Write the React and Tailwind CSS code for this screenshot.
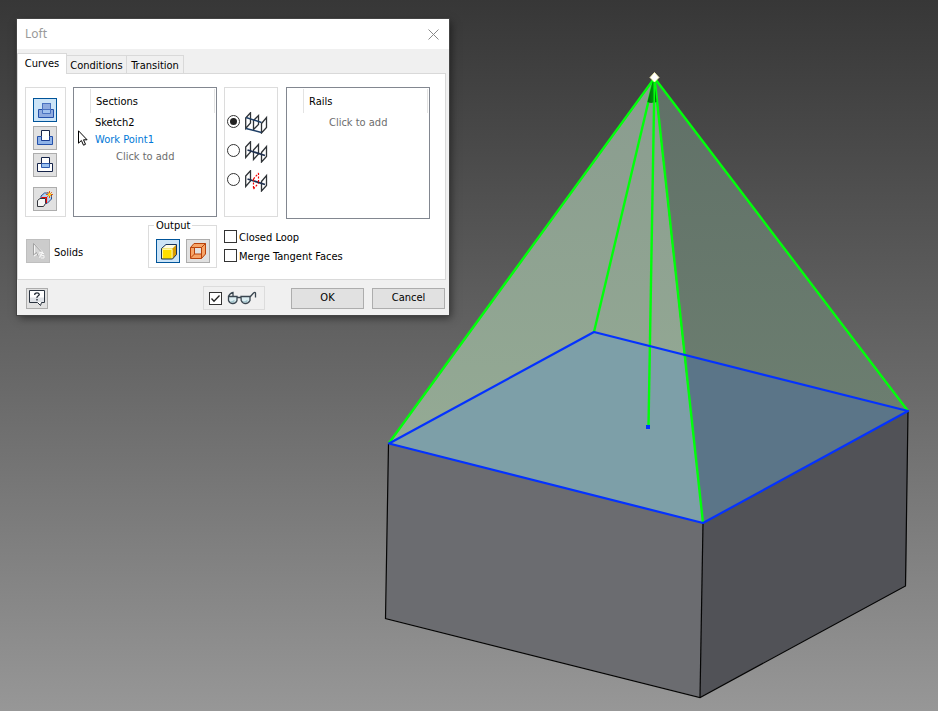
import { useState } from "react";

function Scene() {
  return (
    <svg
      viewBox="0 0 938 711"
      preserveAspectRatio="xMaxYMax meet"
      className="block h-full w-full"
      role="img"
      aria-label="Loft preview"
    >
      <defs>
        <linearGradient id="litFace" x1="0" y1="78" x2="0" y2="444" gradientUnits="userSpaceOnUse">
          <stop offset="0" stopColor="#8a9c8f" />
          <stop offset="1" stopColor="#94aa94" />
        </linearGradient>
        <linearGradient id="shadeFace" x1="0" y1="78" x2="0" y2="411" gradientUnits="userSpaceOnUse">
          <stop offset="0" stopColor="#607067" />
          <stop offset="1" stopColor="#6c7e70" />
        </linearGradient>
        <linearGradient id="cone" x1="646" x2="659" y1="0" y2="0" gradientUnits="userSpaceOnUse">
          <stop offset="0" stopColor="#005a08" />
          <stop offset="0.6" stopColor="#00950c" />
          <stop offset="1" stopColor="#00600a" />
        </linearGradient>
      </defs>
      <polygon points="388,444 703,523 700,697 386,618" fill="#6b6c70" />
      <polygon points="703,523 908,411 906,586 700,697" fill="#515257" />
      <polygon points="654,78 389,443 594,332 684,355" fill="url(#litFace)" />
      <polygon points="654,78 684,355 908,411" fill="url(#shadeFace)" />
      <polygon points="389,443 594,332 684,355 703,523" fill="#7d9fa8" />
      <polygon points="684,355 908,411 703,523" fill="#5b7588" />
      <g stroke="#050505" strokeWidth="1.2" fill="none">
        <path d="M388.500 444L385.500 618.500L700 697.500L905.500 586L908 411" />
        <path d="M703 523L700 697.500" />
      </g>
      <g stroke="#00ff0a" strokeWidth="2.400" fill="none">
        <path d="M389 443L654.500 78L908 411" />
        <path d="M654 78L594 332" />
        <path d="M654.500 78L703 523" />
        <path d="M654.500 78L648.500 427" />
      </g>
      <path d="M652.500 82L647.500 102Q651 103.500 653.500 102.500V82Z" fill="url(#cone)" />
      <path d="M655 88L655 102.500L656.500 102Z" fill="#007a0c" />
      <path d="M389 443.500L594 332L908 411L703 523Z" fill="none" stroke="#0432ff" strokeWidth="2.200" strokeLinejoin="round" />
      <rect x="646" y="425" width="4" height="4" fill="#0432ff" />
      <path d="M654.500 72.500L659 77.500L654.500 82L650 77.500Z" fill="#fff" stroke="#fffbb0" strokeWidth="0.8" />
    </svg>
  );
}

const svgProps = { width: 18, height: 18, viewBox: "0 0 18 18", fill: "none", "aria-hidden": true };

function JoinIcon() {
  return (
    <svg {...svgProps}>
      <path d="M2.500 8.500h4v-6h8v6h3v8h-15z" fill="#8fabdf" stroke="#2350ab" />
      <path d="M6.500 8.500v4h8v-4z" fill="#a2c2ee" stroke="#4a72c0" />
      <path d="M6.500 8.500v-6h8v6" stroke="#4a72c0" />
    </svg>
  );
}

function CutIcon() {
  return (
    <svg {...svgProps}>
      <path d="M1.500 7.500h4v4h8v-4h3v8h-15z" fill="#8fb3e8" stroke="#2350ab" />
      <path d="M5.500 1.500h8v10h-8z" fill="#fff" />
      <path d="M5.500 7.500v-6h8v6" stroke="#16244a" />
      <path d="M5.500 7.500v4h8v-4" stroke="#1b3e93" />
    </svg>
  );
}

function IntersectIcon() {
  return (
    <svg {...svgProps}>
      <path d="M1.500 7.500h15v8h-15z" fill="#fff" stroke="#16244a" />
      <path d="M5.500 1.500h8v10h-8z" fill="#fff" />
      <path d="M5.500 7.500h8v4h-8z" fill="#9cc2f0" stroke="#2c58ad" />
      <path d="M5.500 7.500v-6h8v6" stroke="#16244a" />
    </svg>
  );
}

function NewSolidIcon() {
  return (
    <svg {...svgProps}>
      <path d="M5 6l3.500-3h4l3 2v4L11 13.500H5z" fill="#b4d2f2" stroke="#2c508f" />
      <path d="M1.500 10.500L4 8.500h5.500v5L7.500 16.500h-6z" fill="#f6f6f6" stroke="#33363c" />
      <path d="M5.500 7.500h5v5.500" stroke="#f00000" strokeWidth="1.200" />
      <path d="M13.500 1v7M10 4.500h7M11.200 2.200l4.600 4.600M15.800 2.200l-4.600 4.600" stroke="#e8600a" />
      <circle cx="13.500" cy="4.500" r="1.500" fill="#ffe030" />
    </svg>
  );
}

function SolidCubeIcon() {
  return (
    <svg {...svgProps}>
      <path d="M2.500 6.500L7 2.500h10.500L13.500 6.500z" fill="#fffbe0" />
      <path d="M2.500 6.500h11v10.500h-11z" fill="#ffdf00" />
      <path d="M13.500 6.500L17.500 2.500v10L13.500 17z" fill="#d79a00" />
      <path d="M3.500 16V7.500h9.500v9" stroke="#fff7a0" />
      <path d="M2.500 6.500L7 2.500h10.500v10l-4 4.500h-11z" stroke="#17325c" strokeLinejoin="round" />
    </svg>
  );
}

function SurfaceCubeIcon() {
  return (
    <svg {...svgProps}>
      <path d="M1.500 5.500L5 1.500h11.500v10.500l-4 4.500h-11z" fill="#f7a467" stroke="#b8430c" strokeLinejoin="round" />
      <path d="M1.500 5.500h11v11M12.500 5.500l4-4" stroke="#b8430c" />
      <path d="M5.500 5.500h7v6.500h-7z" fill="#e2e2e2" stroke="#b8430c" />
      <path d="M1.500 16l4-4" stroke="#b8430c" />
    </svg>
  );
}

const frameProps = {
  width: 23,
  height: 22,
  viewBox: "0 0 23 22",
  fill: "none",
  stroke: "#2f3337",
  strokeWidth: 1.3,
  "aria-hidden": true,
};

function RailsIcon() {
  return (
    <svg {...frameProps}>
      <path d="M0.700 6L5.500 0.700V11L0.700 16.500Z" />
      <path d="M8.500 8.500L13.500 3.500V12.500L8.500 17.500Z" />
      <path d="M16.500 11.500L21.500 5.500V15.500L16.500 21Z" />
      <path d="M1 5.500L16.500 10.500M1 16.500L16.500 20.500" stroke="#1f3f66" strokeWidth="1.500" />
    </svg>
  );
}

function CenterLineIcon() {
  return (
    <svg {...frameProps}>
      <path d="M0.700 6L5.500 0.700V11L0.700 16.500Z" />
      <path d="M8.500 9L13.500 3.500V13L8.500 18.500Z" />
      <path d="M16.500 11.500L21.500 5.500V15.500L16.500 21Z" />
      <path d="M2.500 9L20 14.500" stroke="#1f3050" strokeWidth="1.800" />
    </svg>
  );
}

function AreaIcon() {
  return (
    <svg {...frameProps}>
      <path d="M0.700 6L5.500 0.700V11L0.700 16.500Z" />
      <path d="M16.500 11.500L21.500 5.500V15.500L16.500 21Z" />
      <path d="M2.500 9L20 14.500" stroke="#1f3050" strokeWidth="1.800" />
      <path d="M8.500 9V19M13.500 3V13M8.500 9L13.500 3M8.500 19L13.500 13" stroke="#f00000" strokeDasharray="2 1.500" strokeWidth="1.200" />
    </svg>
  );
}

function ArrowIcon() {
  return (
    <svg width="14" height="18" viewBox="0 0 14 18" fill="none" aria-hidden="true">
      <path d="M3.500 2.500v11.500l3-2.500 2 4 1.500-1-1.500-4h3.500z" fill="#d6d6d6" stroke="#f5f5f5" />
      <path d="M2.500 1.500v11.500l3-2.500 2 4M2.500 1.500l7.500 8" stroke="#a2a2a2" />
      <path d="M13 11.500h-2.500v2h2.500v2.500h-3" stroke="#f5f5f5" />
    </svg>
  );
}

function HelpIcon() {
  return (
    <svg width="16" height="16" viewBox="0 0 16 16" fill="none" aria-hidden="true">
      <path d="M0.500 0.500h15v12H12.500L11.500 15.500L8.500 12.500h-8z" fill="#fff" stroke="#2b3440" />
      <path d="M1 7.500h14V12H1z" fill="#e0e3e8" />
      <path d="M5.800 5V3.800Q6 2.800 8 2.800T10.300 4.300Q10.300 5.300 9 6T8 8M8 9v1.500" stroke="#1d2530" strokeWidth="1.300" />
    </svg>
  );
}

function GlassesIcon() {
  return (
    <svg width="30" height="14" viewBox="0 0 30 14" fill="none" stroke="#3a4650" strokeWidth="1.300" aria-hidden="true">
      <path d="M1.500 5.500h8.500v4q-1 3-4.200 3T1.500 9.500z" fill="#dceef2" />
      <path d="M14 5.500H23v4q-1.500 3-4.500 3T14.200 9.500z" fill="#dceef2" />
      <path d="M10 6.500h4M1.500 5.500Q3 2 6 1.500V5M23 6L26.500 2q1.500-1.200 2 0v4.500" />
      <path d="M3.500 10.500q2 1 4-1M16 10.500q2.500 1 4.500-1" stroke="#9fc3cb" />
    </svg>
  );
}

const operations = [
  { id: "join", label: "Join", Icon: JoinIcon, gap: "" },
  { id: "cut", label: "Cut", Icon: CutIcon, gap: "mt-1" },
  { id: "intersect", label: "Intersect", Icon: IntersectIcon, gap: "mt-[3px]" },
  { id: "new", label: "New solid", Icon: NewSolidIcon, gap: "mt-2.5" },
];

const modes = [
  { id: "rails", label: "Rails", Icon: RailsIcon },
  { id: "center", label: "Center line", Icon: CenterLineIcon },
  { id: "area", label: "Area loft", Icon: AreaIcon },
];

function IconButton({ active, label, className = "", children, onClick }) {
  return (
    <button
      type="button"
      aria-label={label}
      aria-pressed={active}
      onClick={onClick}
      className={`flex size-6 shrink-0 items-center justify-center border ${
        active ? "border-[#005499] bg-[#cce4f7]" : "border-[#adadad] bg-[#e1e1e1]"
      } ${className}`}
    >
      {children}
    </button>
  );
}

function Check({ id, checked, onChange, label, children }) {
  return (
    <div className="flex h-[13px] items-center gap-[2px]">
      <span className="grid size-[13px] shrink-0">
        <input
          id={id}
          type="checkbox"
          checked={checked}
          onChange={onChange}
          aria-label={label}
          className="peer col-start-1 row-start-1 size-[13px] appearance-none border border-[#333] bg-white"
        />
        <svg
          viewBox="0 0 13 13"
          fill="none"
          stroke="#222"
          strokeWidth="1.300"
          aria-hidden="true"
          className="pointer-events-none invisible col-start-1 row-start-1 size-[13px] peer-checked:visible"
        >
          <path d="M2.500 6.500L5 9.200L10.500 3.500" />
        </svg>
      </span>
      {children}
    </div>
  );
}

function ListBox({ title, className, children }) {
  return (
    <section className={`w-36 shrink-0 border border-[#828790] bg-white ${className}`}>
      <h2 className="mt-px mr-px ml-4 h-6 border-x border-[#e3e3e3] pt-px pl-[5px] leading-6">{title}</h2>
      {children}
    </section>
  );
}

function LoftDialog() {
  const [operation, setOperation] = useState("join");
  const [mode, setMode] = useState("rails");
  const [output, setOutput] = useState("solid");
  const [closed, setClosed] = useState(false);
  const [merge, setMerge] = useState(false);
  const [preview, setPreview] = useState(true);

  return (
    <div
      role="dialog"
      aria-labelledby="loft-title"
      className="absolute top-[19px] left-[17px] w-[432px] bg-[#f0f0f0] font-['DejaVu_Sans_Condensed','DejaVu_Sans',sans-serif] text-[11px] text-black shadow-[0_0_0_1px_#444,2px_3px_8px_rgba(0,0,0,0.5)]"
    >
      <header className="flex h-[30px] items-center justify-between bg-white pr-2.5 pl-2">
        <h1 id="loft-title" className="font-['Noto_Sans',sans-serif] text-xs text-[#999]">Loft</h1>
        <button type="button" aria-label="Close" className="text-[#888]">
          <svg width="11" height="11" viewBox="0 0 11 11" stroke="currentColor" aria-hidden="true">
            <path d="M0.500 0.500l10 10M10.500 0.500l-10 10" />
          </svg>
        </button>
      </header>

      <div className="pt-1 pr-[3px]">
        <div role="tablist" className="flex items-end">
          <button type="button" role="tab" aria-selected="true" className="z-10 -mb-px h-[21px] w-[50px] border border-b-0 border-[#d9d9d9] bg-white">
            Curves
          </button>
          <button type="button" role="tab" aria-selected="false" className="h-[18px] w-[60px] border-t border-r border-[#d9d9d9] pt-[2px] leading-4 whitespace-nowrap">
            Conditions
          </button>
          <button type="button" role="tab" aria-selected="false" className="h-[18px] w-[57px] border-t border-r border-[#d9d9d9] pt-[2px] leading-4 whitespace-nowrap">
            Transition
          </button>
        </div>

        <div role="tabpanel" className="border border-[#d9d9d9] bg-white px-[7px] pt-[13px] pb-[11px]">
          <div className="flex items-start gap-[7px]">
            <div role="group" aria-label="Operation" className="h-[130px] w-[41px] border border-[#dcdcdc] px-[7px] pt-2.5">
              {operations.map(({ id, label, Icon, gap }) => (
                <IconButton key={id} label={label} active={operation === id} onClick={() => setOperation(id)} className={gap}>
                  <Icon />
                </IconButton>
              ))}
            </div>

            <ListBox title="Sections" className="h-[130px]">
              <ul className="pt-px pl-[21px] leading-[17px]">
                <li>Sketch2</li>
                <li className="text-[#0078d7]">Work Point1</li>
                <li className="pl-[21px] text-[#6d6d6d]">Click to add</li>
              </ul>
            </ListBox>

            <div role="radiogroup" aria-label="Loft type" className="flex h-[130px] w-[54px] flex-col gap-[7px] border border-[#dcdcdc] pt-6 pl-[2px]">
              {modes.map(({ id, label, Icon }) => (
                <label key={id} className="flex h-[22px] items-start gap-[5px]">
                  <input
                    type="radio"
                    name="mode"
                    aria-label={label}
                    checked={mode === id}
                    onChange={() => setMode(id)}
                    className="mt-[3px] grid size-[13px] shrink-0 appearance-none place-items-center rounded-full border border-[#333] bg-white before:size-[7px] before:rounded-full checked:before:bg-[#222]"
                  />
                  <Icon />
                </label>
              ))}
            </div>

            <ListBox title="Rails" className="ml-px h-[132px]">
              <p className="pt-px pl-[42px] leading-[17px] text-[#6d6d6d]">Click to add</p>
            </ListBox>
          </div>

          <div className="flex items-start">
            <div className="flex w-[123px] items-center gap-1 pt-5 pl-px">
              <button type="button" disabled aria-label="Solids" className="flex size-6 items-center justify-center border border-[#bfbfbf] bg-[#ccc]">
                <ArrowIcon />
              </button>
              <span className="pt-1">Solids</span>
            </div>
            <fieldset className="flex h-[49px] w-[69px] flex-col border border-[#dcdcdc] pl-[5px]">
              <legend className="px-[2px] leading-[13px]">Output</legend>
              <div className="flex gap-1.5 pt-[7px] pl-[2px]">
                <IconButton label="Solid" active={output === "solid"} onClick={() => setOutput("solid")}>
                  <SolidCubeIcon />
                </IconButton>
                <IconButton label="Surface" active={output === "surface"} onClick={() => setOutput("surface")}>
                  <SurfaceCubeIcon />
                </IconButton>
              </div>
            </fieldset>
            <div className="ml-[7px] flex flex-col gap-1.5 pt-[11px] leading-[13px]">
              <Check id="closed" checked={closed} onChange={() => setClosed(!closed)}>
                <label htmlFor="closed" className="pt-[2px]">Closed Loop</label>
              </Check>
              <Check id="merge" checked={merge} onChange={() => setMerge(!merge)}>
                <label htmlFor="merge" className="pt-[2px]">Merge Tangent Faces</label>
              </Check>
            </div>
          </div>
        </div>
      </div>

      <footer className="flex h-[35px] items-center gap-2 pt-px pr-1 pl-[9px]">
        <button type="button" aria-label="Help" className="flex h-[21px] w-[22px] items-center justify-center border border-[#adadad] bg-[#e1e1e1]">
          <HelpIcon />
        </button>
        <div className="mr-[18px] ml-auto flex h-6 w-[62px] items-center border border-[#dcdcdc] pl-[5px]">
          <Check id="preview" label="Preview" checked={preview} onChange={() => setPreview(!preview)}>
            <label htmlFor="preview" className="pl-[3px]">
              <GlassesIcon />
            </label>
          </Check>
        </div>
        <button type="button" className="h-[21px] w-[73px] border border-[#adadad] bg-[#e1e1e1] pt-px">OK</button>
        <button type="button" className="h-[21px] w-[73px] border border-[#adadad] bg-[#e1e1e1] pt-px">Cancel</button>
      </footer>
    </div>
  );
}

export default function App() {
  return (
    <main className="relative h-screen overflow-hidden bg-linear-to-b from-[#373737] to-[#979797]">
      <Scene />
      <LoftDialog />
      <svg
        width="12"
        height="18"
        viewBox="0 0 12 18"
        aria-hidden="true"
        className="pointer-events-none absolute top-[130px] left-[78px]"
      >
        <path d="M0.500 0.800v12.400l2.900-2.700 2.100 4.700 2-0.900-2-4.500h3.600z" fill="#fff" stroke="#000" />
      </svg>
    </main>
  );
}
